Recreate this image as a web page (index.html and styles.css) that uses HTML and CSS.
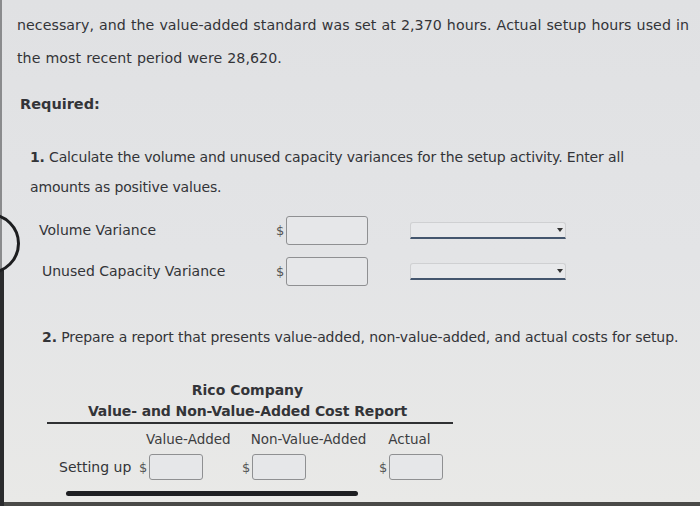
FILE: index.html
```html
<!DOCTYPE html>
<html>
<head>
<meta charset="utf-8">
<link rel="stylesheet" href="styles.css">
</head>
<body>
<div class="screen">
  <div class="bezel"></div>
  <div class="ring"></div>
  <p class="para">necessary, and the value-added standard was set at 2,370 hours. Actual setup hours used in the most recent period were 28,620.</p>
  <p class="required">Required:</p>
  <p class="q q1"><b>1.</b> Calculate the volume and unused capacity variances for the setup activity. Enter all amounts as positive values.</p>
  <div class="vrow">
    <span class="vlabel">Volume Variance</span>
    <span class="dollar">$</span><span class="box big"></span>
    <span class="select"><span class="arrow"></span></span>
  </div>
  <div class="vrow second">
    <span class="vlabel">Unused Capacity Variance</span>
    <span class="dollar">$</span><span class="box big"></span>
    <span class="select"><span class="arrow"></span></span>
  </div>
  <p class="q q2"><b>2.</b> Prepare a report that presents value-added, non-value-added, and actual costs for setup.</p>
  <div class="report">
    <div class="title">Rico Company</div>
    <div class="title sub">Value- and Non-Value-Added Cost Report</div>
    <div class="rule"></div>
    <div class="heads">
      <span class="h1">Value-Added</span>
      <span class="h2">Non-Value-Added</span>
      <span class="h3">Actual</span>
    </div>
    <div class="srow">
      <span class="slabel">Setting up</span>
      <span class="dollar">$</span><span class="box sm"></span>
      <span class="dollar d2">$</span><span class="box sm"></span>
      <span class="dollar d3">$</span><span class="box sm"></span>
    </div>
  </div>
  <div class="scroll"></div>
</div>
</body>
</html>
```
FILE: styles.css
```css
html, body { margin: 0; padding: 0; }
body {
  width: 700px; height: 506px; overflow: hidden;
  background: linear-gradient(180deg, #e0e1e3 0%, #e3e4e6 50%, #e9e9e7 100%);
  font-family: "DejaVu Sans", Verdana, sans-serif;
  color: #333438;
}
.screen { position: relative; width: 700px; height: 506px; padding: 9px 0 0 17px; box-sizing: border-box; border-bottom: 4px solid #4a4a48; }
p { margin: 0; }
.para { font-size: 14.2px; line-height: 33px; width: 685px; letter-spacing: 0.05px; word-spacing: 0.5px; }
.required { font-weight: bold; font-size: 14.5px; margin: 17px 0 0 3px; line-height: 24px; }
.q { font-size: 14px; line-height: 30px; }
.q1 { margin: 26px 0 0 13px; width: 630px; letter-spacing: -0.15px; }
.q b { font-weight: bold; }
.vrow { display: flex; align-items: center; height: 30px; margin: 13px 0 0 22px; }
.vrow.second { margin: 11px 0 0 25px; }
.vlabel { font-size: 14px; width: 237px; }
.vrow.second .vlabel { width: 234px; }
.dollar { font-size: 13px; color: #555; width: 10px; }
.box { display: inline-block; border: 1.5px solid #8f9092; border-radius: 3px; background: #e6e7e9; box-sizing: border-box; }
.box.big { width: 82px; height: 29px; }
.select { position: relative; display: inline-block; width: 156px; height: 17px; margin: 0 0 0 42px; border: 1px solid #cfd0d2; border-bottom: 2.5px solid #44566e; border-radius: 3px 3px 0 0; box-sizing: border-box; background: #e8e9eb; }
.arrow { position: absolute; right: 2px; top: 5px; width: 0; height: 0; border-left: 3.5px solid transparent; border-right: 3.5px solid transparent; border-top: 4px solid #333; }
.q2 { margin: 36px 0 0 25px; letter-spacing: -0.1px; }
.report { width: 406px; margin: 28px 0 0 30px; }
.title { text-align: center; font-weight: bold; font-size: 14px; line-height: 21px; padding-right: 5px; }
.title.sub { letter-spacing: -0.1px; }
.rule { height: 2px; background: #2f3033; }
.heads { display: flex; font-size: 13.5px; line-height: 20px; margin-top: 5px; color: #3c3d40; }
.h1 { margin-left: 99px; }
.h2 { margin-left: 20px; }
.h3 { margin-left: 22px; }
.srow { display: flex; align-items: center; margin-top: 5px; margin-left: 12px; }
.slabel { font-size: 14px; width: 80px; }
.box.sm { width: 54px; height: 26px; }
.d2 { margin-left: 39px; }
.d3 { margin-left: 73px; }
.scroll { width: 292px; height: 5px; border-radius: 3px; background: #1e1f22; margin: 11px 0 0 49px; }
.bezel { position: absolute; left: 0; top: 0; width: 2px; height: 270px; background: #8a8b8d; }
.bezel::after { content: ""; position: absolute; left: 0; top: 270px; width: 4px; height: 236px; background: #2a2b2d; }
.ring { position: absolute; left: -41px; top: 213px; width: 55px; height: 55px; border: 3px solid #1d1e20; border-radius: 50%; }
```
